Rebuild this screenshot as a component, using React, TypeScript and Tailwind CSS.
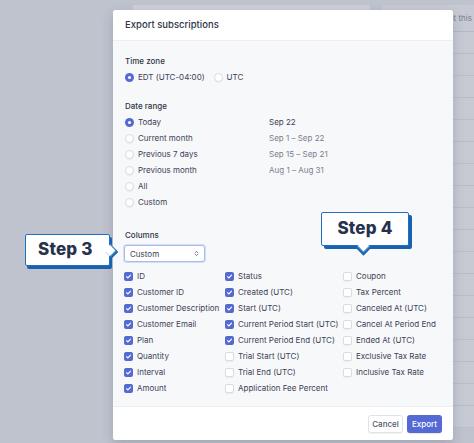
import React from 'react';

const font = { fontFamily: 'Inter, "Noto Sans", sans-serif' };

const Radio = ({ on }: { on?: boolean }) =>
  on ? (
    <span className="w-[9px] h-[9px] rounded-full bg-[#5469d4] flex items-center justify-center shrink-0">
      <span className="w-[3px] h-[3px] rounded-full bg-white" />
    </span>
  ) : (
    <span className="w-[9px] h-[9px] rounded-full bg-white border border-[#d8dce3] shadow-[0_1px_1px_rgba(0,0,0,0.05)] shrink-0" />
  );

const Check = ({ on }: { on?: boolean }) =>
  on ? (
    <span className="w-[9px] h-[9px] rounded-[2px] bg-[#5469d4] flex items-center justify-center shrink-0">
      <svg viewBox="0 0 10 10" className="w-[7px] h-[7px]">
        <path d="M2.2 5.2 L4.2 7.1 L7.9 3" fill="none" stroke="white" strokeWidth="1.6" strokeLinecap="round" strokeLinejoin="round" />
      </svg>
    </span>
  ) : (
    <span className="w-[9px] h-[9px] rounded-[2px] bg-white border border-[#d8dce3] shadow-[0_1px_1px_rgba(0,0,0,0.05)] shrink-0" />
  );

const dateRanges = [
  { label: 'Today', date: 'Sep 22', on: true },
  { label: 'Current month', date: 'Sep 1 – Sep 22' },
  { label: 'Previous 7 days', date: 'Sep 15 – Sep 21' },
  { label: 'Previous month', date: 'Aug 1 – Aug 31' },
  { label: 'All', date: '' },
  { label: 'Custom', date: '' },
];

const columns: [string, boolean][][] = [
  [['ID', true], ['Customer ID', true], ['Customer Description', true], ['Customer Email', true], ['Plan', true], ['Quantity', true], ['Interval', true], ['Amount', true]],
  [['Status', true], ['Created (UTC)', true], ['Start (UTC)', true], ['Current Period Start (UTC)', true], ['Current Period End (UTC)', true], ['Trial Start (UTC)', false], ['Trial End (UTC)', false], ['Application Fee Percent', false]],
  [['Coupon', false], ['Tax Percent', false], ['Canceled At (UTC)', false], ['Cancel At Period End', false], ['Ended At (UTC)', false], ['Exclusive Tax Rate', false], ['Inclusive Tax Rate', false]],
];

export default function App() {
  return (
    <div className="relative w-[474px] h-[443px] overflow-hidden bg-[#bfc3ce]" style={font}>
      {/* page behind the overlay */}
      <div className="flex pt-[5px] gap-[12px] pl-[133px]">
        <div className="w-[237px] h-[10px] bg-[#cdd0d9]" />
        <div className="flex-1 flex flex-col bg-[#c7cad3]">
          <div className="h-[27px] flex items-center justify-end pr-[2px] text-[8px] text-[#7c8190] border-b border-[#b5b9c4]">at this</div>
          {Array.from({ length: 18 }).map((_, i) => (
            <div key={i} className="h-[22px] border-b border-[#b9bdc8]" />
          ))}
        </div>
      </div>

      {/* modal */}
      <div className="absolute left-[113px] top-[10px] w-[340px] h-[430px] flex flex-col bg-[#f7f8fa] rounded-[3px] shadow-[0_4px_12px_rgba(40,50,80,0.2)] overflow-hidden">
        <div className="h-[31px] bg-white border-b border-[#eceef2] flex items-center pl-[12px] text-[9.5px] font-medium text-[#2f3646]">
          Export subscriptions
        </div>
        <div className="flex-1 flex flex-col pl-[11px] pt-[14px] text-[8px] text-[#3c4257]">
          <div className="h-[12px] flex items-center pl-[1px] font-medium text-[#2f3646]">Time zone</div>
          <div className="mt-[2px] h-[16px] flex items-center pl-[1px]">
            <Radio on />
            <span className="ml-[4px]">EDT (UTC-04:00)</span>
            <span className="ml-[9px] flex items-center"><Radio /></span>
            <span className="ml-[4px]">UTC</span>
          </div>

          <div className="mt-[15px] h-[12px] flex items-center pl-[1px] font-medium text-[#2f3646]">Date range</div>
          <div className="mt-[2px] flex flex-col">
            {dateRanges.map((r) => (
              <div key={r.label} className="h-[16px] flex items-center pl-[1px]">
                <div className="w-[144px] flex items-center">
                  <Radio on={r.on} />
                  <span className="ml-[4px]">{r.label}</span>
                </div>
                <span className={r.on ? 'text-[#3c4257]' : 'text-[#7a8091]'}>{r.date}</span>
              </div>
            ))}
          </div>

          <div className="mt-[19px] h-[12px] flex items-center pl-[1px] font-medium text-[#2f3646]">Columns</div>
          <div className="mt-[4px] w-[81px] h-[17px] bg-white rounded-[3px] border border-[#a9bde9] shadow-[0_0_0_1px_#d3ddf5] flex items-center justify-between pl-[5px] pr-[4px]">
            <span>Custom</span>
            <svg viewBox="0 0 10 10" className="w-[7px] h-[7px]">
              <path d="M3 4 L5 2 L7 4 M3 6 L5 8 L7 6" fill="none" stroke="#4f566b" strokeWidth="1.1" strokeLinecap="round" strokeLinejoin="round" />
            </svg>
          </div>
          <div className="mt-[6px] flex">
            {columns.map((col, ci) => (
              <div key={ci} className={`flex flex-col ${ci === 0 ? 'w-[101px]' : ci === 1 ? 'w-[118px]' : ''}`}>
                {col.map(([label, on]) => (
                  <div key={label} className="h-[16px] flex items-center">
                    <Check on={on} />
                    <span className="ml-[4px] whitespace-nowrap">{label}</span>
                  </div>
                ))}
              </div>
            ))}
          </div>
        </div>
        <div className="h-[34px] bg-white border-t border-[#eceef2] flex items-center justify-end gap-[4px] pr-[11px] text-[8px] font-medium">
          <button className="w-[35px] h-[18px] rounded-[3px] bg-white border border-[#dfe2e8] shadow-[0_1px_1px_rgba(0,0,0,0.06)] text-[#4f566b]">Cancel</button>
          <button className="w-[35px] h-[18px] rounded-[3px] bg-[#5469d4] text-white shadow-[0_1px_1px_rgba(0,0,0,0.1)]">Export</button>
        </div>
      </div>

      {/* Step 3 callout */}
      <div className="absolute left-[25px] top-[234px] w-[85px] h-[32px] bg-white border-[1.5px] border-[#1f70c2] rounded-[2px] shadow-[2px_3px_0_#1a62ae] flex items-center pl-[12px] text-[17px] font-extrabold text-[#27334d] tracking-[0.2px]">
        Step 3
        <span className="absolute right-[-6px] top-[11px] w-[9px] h-[9px] bg-white border-t-[1.5px] border-r-[1.5px] border-[#1f70c2] rotate-45 shadow-[2px_0_0_#1a62ae]" />
      </div>

      {/* Step 4 callout */}
      <div className="absolute left-[321px] top-[212px] w-[88px] h-[34px] bg-white border-[1.5px] border-[#1f70c2] rounded-[2px] shadow-[3px_3px_0_#1a62ae] flex items-center justify-center text-[17px] font-extrabold text-[#27334d] tracking-[0.2px]">
        Step 4
        <span className="absolute left-[37px] bottom-[-6px] w-[9px] h-[9px] bg-white border-b-[1.5px] border-r-[1.5px] border-[#1f70c2] rotate-45 shadow-[2px_2px_0_#1a62ae]" />
      </div>
    </div>
  );
}
